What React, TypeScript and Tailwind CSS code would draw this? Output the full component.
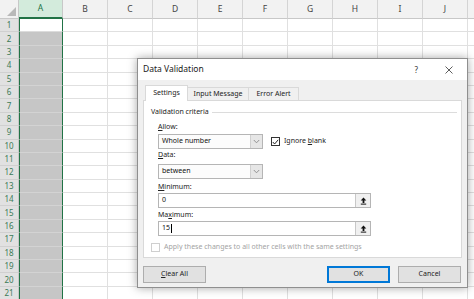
import React from "react";

const COLS = ["A", "B", "C", "D", "E", "F", "G", "H", "I", "J"];
const ROWS = Array.from({ length: 22 }, (_, i) => i + 1);

function Grid() {
  return (
    <div className="flex flex-col">
      <div className="flex h-[19px] shrink-0">
        <div className="relative w-[19px] shrink-0 bg-[#f2f2f2] border-r border-b border-[#c8c8c8]">
          <svg className="absolute right-[2px] bottom-[2px]" width="9" height="9" viewBox="0 0 9 9">
            <polygon points="9,0 9,9 0,9" fill="#b9b9b9" />
          </svg>
        </div>
        {COLS.map((c) =>
          c === "A" ? (
            <div
              key={c}
              className="w-[44px] shrink-0 flex items-center justify-center bg-[#d3ebdc] border-r border-[#c8c8c8] border-b-2 border-b-[#217346] text-[#217346] text-[8.5px]"
            >
              {c}
            </div>
          ) : (
            <div
              key={c}
              className="w-[45px] shrink-0 flex items-center justify-center bg-[#f2f2f2] border-r border-b border-r-[#d4d4d4] border-b-[#c8c8c8] text-[#444] text-[8.5px]"
            >
              {c}
            </div>
          )
        )}
        <div className="flex-1 bg-[#f2f2f2] border-b border-[#c8c8c8]" />
      </div>
      {ROWS.map((r) => (
        <div key={r} className="flex h-[13.4px] shrink-0">
          <div className="w-[19px] shrink-0 flex items-center justify-center bg-[#e1e1e1] border-r border-b border-r-[#c8c8c8] border-b-[#d0d0d0] text-[#3b7a56] text-[8px] leading-none">
            {r}
          </div>
          <div
            className={
              r === 1
                ? "w-[44px] shrink-0 bg-white border-l border-r border-[#217346] border-b border-b-[#dcdcdc]"
                : "w-[44px] shrink-0 bg-[#c6c6c6] border-l border-r border-[#217346] border-b border-b-[#d3d3d3]"
            }
          />
          {COLS.slice(1).map((c) => (
            <div key={c} className="w-[45px] shrink-0 bg-white border-r border-b border-[#e0e0e0]" />
          ))}
          <div className="flex-1 bg-white border-b border-[#e0e0e0]" />
        </div>
      ))}
    </div>
  );
}

function Chevron() {
  return (
    <svg width="7" height="5" viewBox="0 0 7 5">
      <polyline points="0.8,1 3.5,3.8 6.2,1" fill="none" stroke="#8a8a8a" strokeWidth="0.9" />
    </svg>
  );
}

function Combo({ value }: { value: string }) {
  return (
    <div className="flex h-[15px] w-[105px] border border-[#b5b5b5] bg-[#fcfcfc]">
      <div className="flex-1 flex items-center pl-[3px] text-[7px] text-[#111]">{value}</div>
      <div className="w-[12px] flex items-center justify-center bg-[#e6e6e6] border-l border-[#d0d0d0]">
        <Chevron />
      </div>
    </div>
  );
}

function RangeInput({ value, cursor }: { value: string; cursor?: boolean }) {
  return (
    <div className="flex h-[15px] w-[213px] border border-[#b5b5b5] bg-white">
      <div className="flex-1 flex items-center pl-[3px] text-[7px] text-[#111]">
        {value}
        {cursor && <span className="inline-block w-px h-[9px] bg-black ml-[0.5px]" />}
      </div>
      <div className="w-[15px] flex items-center justify-center bg-[#f0f0f0] border-l border-[#c8c8c8]">
        <svg width="7" height="8" viewBox="0 0 7 8">
          <polygon points="3.5,0.5 6.3,3.6 4.4,3.6 4.4,6 2.6,6 2.6,3.6 0.7,3.6" fill="#111" />
          <rect x="0.8" y="6.6" width="5.4" height="1" fill="#111" />
        </svg>
      </div>
    </div>
  );
}

function Label({ children, className = "" }: { children: React.ReactNode; className?: string }) {
  return <div className={"h-[12px] flex items-center text-[7px] text-[#222] " + className}>{children}</div>;
}

function Dialog() {
  return (
    <div className="absolute left-[137px] top-[58px] w-[331px] h-[230px] flex flex-col border border-[#8f8f8f] bg-[#f0f0f0] shadow-[0_0_9px_rgba(0,0,0,0.35)] font-['Noto_Sans',sans-serif]">
      <div className="h-[21px] shrink-0 flex items-center bg-white pl-[5px] pr-[14px]">
        <span className="text-[8.5px] text-[#1a1a1a]">Data Validation</span>
        <span className="ml-auto text-[8px] text-[#333] mr-[27px]">?</span>
        <svg width="8" height="8" viewBox="0 0 8 8">
          <path d="M0.5 0.5 L7.5 7.5 M7.5 0.5 L0.5 7.5" stroke="#333" strokeWidth="0.8" />
        </svg>
      </div>
      <div className="flex-1 flex flex-col px-[5px] pt-[5px]">
        <div className="flex items-end h-[15px] pl-[2px]">
          <div className="relative z-10 h-[16px] -mb-px w-[43px] flex items-center justify-center bg-white border border-b-0 border-[#d9d9d9] text-[7px] text-[#222]">
            Settings
          </div>
          <div className="h-[13px] w-[61px] flex items-center justify-center border-t border-r border-[#d9d9d9] text-[7px] text-[#222]">
            Input Message
          </div>
          <div className="h-[13px] w-[50px] flex items-center justify-center border-t border-r border-[#d9d9d9] text-[7px] text-[#222]">
            Error Alert
          </div>
        </div>
        <div className="h-[158px] shrink-0 flex flex-col bg-white border border-[#d9d9d9] pt-[5px] pl-[7px] pr-[4px]">
          <div className="h-[12px] flex items-center gap-[3px]">
            <span className="text-[7px] text-[#222]">Validation criteria</span>
            <div className="flex-1 h-px bg-[#dcdcdc]" />
          </div>
          <div className="flex flex-col pl-[7px] mt-[3px]">
            <Label>
              <span>
                <span className="underline">A</span>llow:
              </span>
            </Label>
            <div className="flex items-center mt-[1px]">
              <Combo value="Whole number" />
              <div className="ml-[8px] w-[9px] h-[9px] border border-[#333] bg-white flex items-center justify-center">
                <svg width="7" height="6" viewBox="0 0 7 6">
                  <polyline points="0.8,3 2.6,5 6.2,0.8" fill="none" stroke="#111" strokeWidth="0.9" />
                </svg>
              </div>
              <span className="ml-[4px] text-[7px] text-[#222]">
                Ignore <span className="underline">b</span>lank
              </span>
            </div>
            <Label>
              <span>
                <span className="underline">D</span>ata:
              </span>
            </Label>
            <div className="mt-[3px]">
              <Combo value="between" />
            </div>
            <Label className="mt-[2px]">
              <span>
                <span className="underline">M</span>inimum:
              </span>
            </Label>
            <RangeInput value="0" />
            <Label className="mt-[1px]">
              <span>
                Ma<span className="underline">x</span>imum:
              </span>
            </Label>
            <RangeInput value="15" cursor />
          </div>
          <div className="flex items-center h-[12px] mt-[5px]">
            <div className="w-[9px] h-[9px] border border-[#cfcfcf] bg-white" />
            <span className="ml-[4px] text-[7px] text-[#a3a3a3]">
              Apply these changes to all other cells with the same settings
            </span>
          </div>
        </div>
        <div className="flex mt-[8px]">
          <div className="h-[17px] w-[63px] flex items-center justify-center bg-[#e1e1e1] border border-[#adadad] text-[7px] text-[#222]">
            <span>
              <span className="underline">C</span>lear All
            </span>
          </div>
          <div className="ml-auto h-[17px] w-[63px] flex items-center justify-center bg-[#e1e1e1] border border-[#0078d7] shadow-[inset_0_0_0_1px_#0078d7] text-[7px] text-[#222]">
            OK
          </div>
          <div className="ml-[8px] mr-[1px] h-[17px] w-[63px] flex items-center justify-center bg-[#e1e1e1] border border-[#adadad] text-[7px] text-[#222]">
            Cancel
          </div>
        </div>
      </div>
    </div>
  );
}

export default function App() {
  return (
    <div className="relative w-[474px] h-[299px] overflow-hidden bg-white font-['Noto_Sans',sans-serif]">
      <Grid />
      <Dialog />
    </div>
  );
}
